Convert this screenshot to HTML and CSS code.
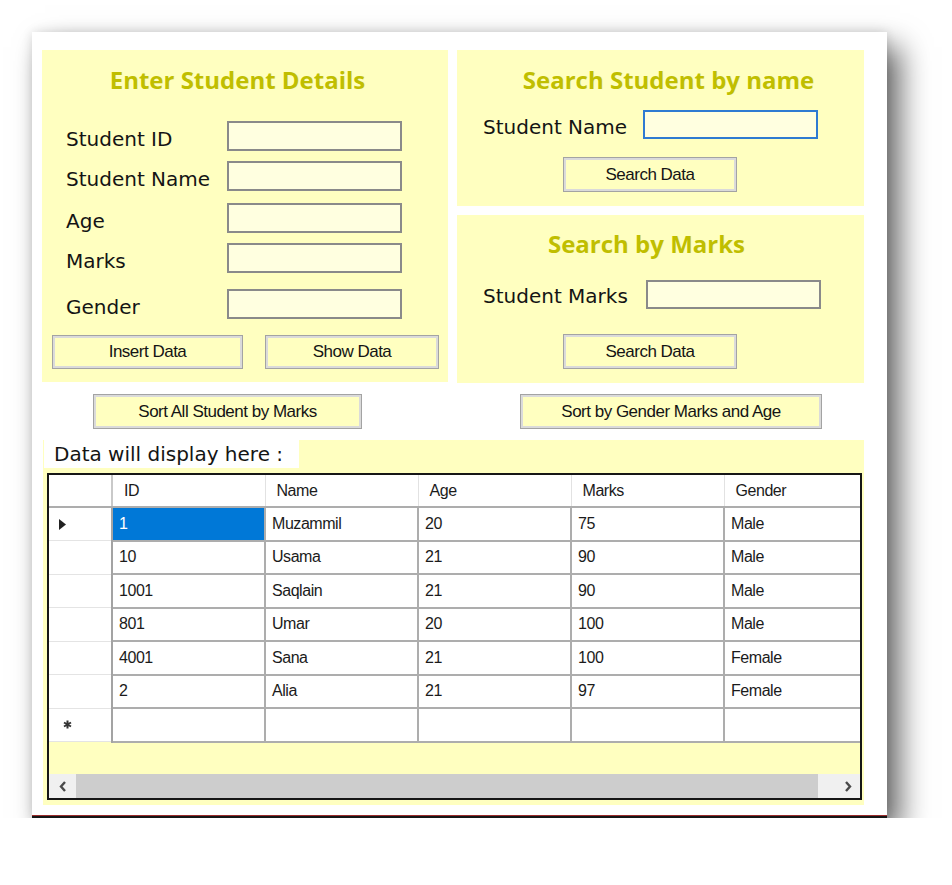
FILE: index.html
```
<!DOCTYPE html>
<html lang="en">
<head>
  <meta charset="UTF-8" />
  <meta name="viewport" content="width=device-width, initial-scale=1.0"/>
  <title>Student Records</title>
  <link rel="stylesheet" href="styles.css">
</head>
<body>
  <div class="window">
    <div class="top-area">
      <section class="panel entry-panel">
        <h2 class="panel-title entry-title">Enter Student Details</h2>
        <div class="field first">
          <label for="student-id">Student ID</label>
          <input type="text" id="student-id" />
        </div>
        <div class="field">
          <label for="student-name">Student Name</label>
          <input type="text" id="student-name" />
        </div>
        <div class="field gap-md">
          <label for="age">Age</label>
          <input type="text" id="age" />
        </div>
        <div class="field">
          <label for="marks">Marks</label>
          <input type="text" id="marks" />
        </div>
        <div class="field gap-lg">
          <label for="gender">Gender</label>
          <input type="text" id="gender" />
        </div>
        <div class="entry-actions">
          <button type="button" class="btn insert-btn">Insert Data</button>
          <button type="button" class="btn show-btn">Show Data</button>
        </div>
      </section>

      <div class="search-column">
        <section class="panel name-panel">
          <h2 class="panel-title name-title">Search Student by name</h2>
          <div class="search-field">
            <label for="search-name">Student Name</label>
            <input type="text" id="search-name" class="focused" />
          </div>
          <button type="button" class="btn search-btn">Search Data</button>
        </section>
        <section class="panel marks-panel">
          <h2 class="panel-title marks-title">Search by Marks</h2>
          <div class="search-field">
            <label for="search-marks">Student Marks</label>
            <input type="text" id="search-marks" />
          </div>
          <button type="button" class="btn search-btn">Search Data</button>
        </section>
      </div>
    </div>

    <div class="sort-row">
      <button type="button" class="btn sort-marks-btn">Sort All Student by Marks</button>
      <button type="button" class="btn sort-gender-btn">Sort by Gender Marks and Age</button>
    </div>

    <div class="data-panel">
      <div class="data-caption">Data will display here :</div>
      <div class="data-grid">
        <div class="grid-body">
          <table class="records">
            <colgroup>
              <col class="col-head" />
              <col class="col-data" />
              <col class="col-data" />
              <col class="col-data" />
              <col class="col-data" />
              <col class="col-data" />
            </colgroup>
            <thead>
              <tr>
                <th class="corner"></th>
                <th>ID</th>
                <th>Name</th>
                <th>Age</th>
                <th>Marks</th>
                <th>Gender</th>
              </tr>
            </thead>
            <tbody>
              <tr>
                <td class="row-head">
                  <svg width="7" height="11" viewBox="0 0 7 11"><path d="M0 0 L7 5.5 L0 11 Z" fill="#222"/></svg>
                </td>
                <td class="selected">1</td>
                <td>Muzammil</td>
                <td>20</td>
                <td>75</td>
                <td>Male</td>
              </tr>
              <tr>
                <td class="row-head"></td>
                <td>10</td>
                <td>Usama</td>
                <td>21</td>
                <td>90</td>
                <td>Male</td>
              </tr>
              <tr>
                <td class="row-head"></td>
                <td>1001</td>
                <td>Saqlain</td>
                <td>21</td>
                <td>90</td>
                <td>Male</td>
              </tr>
              <tr>
                <td class="row-head"></td>
                <td>801</td>
                <td>Umar</td>
                <td>20</td>
                <td>100</td>
                <td>Male</td>
              </tr>
              <tr>
                <td class="row-head"></td>
                <td>4001</td>
                <td>Sana</td>
                <td>21</td>
                <td>100</td>
                <td>Female</td>
              </tr>
              <tr>
                <td class="row-head"></td>
                <td>2</td>
                <td>Alia</td>
                <td>21</td>
                <td>97</td>
                <td>Female</td>
              </tr>
              <tr>
                <td class="row-head new-row">
                  <svg width="9" height="9" viewBox="0 0 9 9"><path d="M4.5 0.5 V8.5 M1 2.5 L8 6.5 M1 6.5 L8 2.5" stroke="#333" stroke-width="2"/></svg>
                </td>
                <td></td>
                <td></td>
                <td></td>
                <td></td>
                <td></td>
              </tr>
            </tbody>
          </table>
        </div>
        <div class="grid-fill"></div>
        <div class="hscroll">
          <div class="scroll-btn">
            <svg width="8" height="11" viewBox="0 0 8 11"><path d="M6 1 L2 5.5 L6 10" fill="none" stroke="#4a4a4a" stroke-width="2.4"/></svg>
          </div>
          <div class="scroll-thumb"></div>
          <div class="scroll-btn scroll-end">
            <svg width="8" height="11" viewBox="0 0 8 11"><path d="M2 1 L6 5.5 L2 10" fill="none" stroke="#4a4a4a" stroke-width="2.4"/></svg>
          </div>
        </div>
      </div>
    </div>
  </div>
</body>
</html>
```

FILE: styles.css
```
body {
  margin: 0;
  background: #fff;
  font-family: "DejaVu Sans", Verdana, sans-serif;
  color: #141414;
}

.window {
  margin: 32px 0 0 32px;
  width: 855px;
  height: 786px;
  box-sizing: border-box;
  padding-top: 18px;
  background: #fff;
  border-bottom: 2px solid #151515;
  box-shadow: inset 0 -1px 0 #9b2b2b, 13px 15px 28px rgba(0, 0, 0, 0.6), 0 0 10px rgba(0, 0, 0, 0.12);
}

/* ---------- top panels ---------- */

.top-area {
  display: flex;
  gap: 9px;
  margin-left: 10px;
}

.panel {
  background: #ffffc0;
  box-sizing: border-box;
}

.entry-panel {
  width: 406px;
  height: 332px;
}

.search-column {
  display: flex;
  flex-direction: column;
  gap: 9px;
  width: 407px;
}

.name-panel {
  height: 156px;
}

.marks-panel {
  height: 168px;
}

.panel-title {
  margin: 0;
  padding-top: 14px;
  height: 32px;
  line-height: 32px;
  font-family: "Open Sans", "Noto Sans", sans-serif;
  font-size: 24px;
  font-weight: bold;
  color: #c0be00;
  text-align: center;
}

.entry-title {
  padding-right: 15px;
}

.name-title {
  padding-left: 16px;
}

.marks-title {
  padding-top: 13px;
  padding-right: 28px;
}

.field {
  display: flex;
  align-items: center;
  height: 30px;
  margin-top: 10px;
}

.field.first {
  margin-top: 25px;
}

.field.gap-md {
  margin-top: 12px;
}

.field.gap-lg {
  margin-top: 16px;
}

.field label,
.search-field label {
  font-size: 20px;
  padding-top: 5px;
  box-sizing: border-box;
}

.field label {
  width: 185px;
  padding-left: 24px;
}

input {
  width: 175px;
  height: 30px;
  box-sizing: border-box;
  border: 2px solid #8a8a8a;
  background: #ffffe0;
  padding: 0 4px;
  font-size: 15px;
  outline: none;
}

input.focused {
  border-color: #2f7bd2;
}

.entry-actions {
  display: flex;
  margin-top: 16px;
  padding-left: 10px;
  gap: 22px;
}

.btn {
  height: 34px;
  box-sizing: border-box;
  border: 1px solid #a3a3a3;
  box-shadow: inset 0 0 0 2px #dadada;
  background: #ffffc0;
  font-family: "Liberation Sans", Arial, sans-serif;
  font-size: 17px;
  letter-spacing: -0.5px;
  color: #141414;
  padding: 0;
  cursor: pointer;
}

.insert-btn {
  width: 191px;
}

.show-btn {
  width: 174px;
}

.search-field {
  display: flex;
  align-items: center;
  height: 29px;
  margin-top: 14px;
  padding-left: 26px;
}

.search-field label {
  width: 160px;
}

.search-field input {
  height: 29px;
}

.marks-panel .search-field {
  margin-top: 20px;
}

.marks-panel .search-field label {
  width: 163px;
  padding-top: 2px;
}

.search-btn {
  display: block;
  width: 174px;
  height: 35px;
  margin: 18px 0 0 106px;
}

.marks-panel .search-btn {
  margin-top: 25px;
}

/* ---------- sort buttons ---------- */

.sort-row {
  display: flex;
  gap: 158px;
  margin: 11px 0 0 61px;
}

.sort-row .btn {
  height: 35px;
}

.sort-marks-btn {
  width: 269px;
}

.sort-gender-btn {
  width: 302px;
}

/* ---------- data grid ---------- */

.data-panel {
  width: 821px;
  height: 365px;
  margin: 11px 0 0 11px;
  background: #ffffc0;
}

.data-caption {
  width: 255px;
  height: 28px;
  margin-left: 1px;
  padding-left: 10px;
  box-sizing: border-box;
  background: #fff;
  font-size: 20px;
  line-height: 28px;
}

.data-grid {
  display: flex;
  flex-direction: column;
  width: 815px;
  height: 327px;
  margin: 5px 0 0 4px;
  box-sizing: border-box;
  border: 2px solid #161616;
  background: #ffffc0;
  overflow: hidden;
}

.grid-body {
  overflow: hidden;
}

.records {
  border-collapse: collapse;
  table-layout: fixed;
  width: 828px;
  font-family: "Liberation Sans", Arial, sans-serif;
  font-size: 16px;
  letter-spacing: -0.45px;
  color: #1b1b1b;
}

.col-head {
  width: 63px;
}

.col-data {
  width: 153px;
}

.records th,
.records td {
  padding: 0 0 0 6px;
  text-align: left;
  font-weight: normal;
  background: #fff;
  white-space: nowrap;
  overflow: hidden;
}

.records th {
  height: 31px;
  padding-left: 11px;
  border-right: 1px solid #e2e2e2;
  border-bottom: 2px solid #adadad;
}

.records th.corner {
  border-right: 2px solid #c9c9c9;
}

.records td {
  height: 31.5px;
  border-right: 2px solid #adadad;
  border-bottom: 2px solid #adadad;
}

.records td.row-head {
  padding-left: 10px;
  border-right: 2px solid #a3a3a3;
  border-bottom: 1px solid #e4e4e4;
}

.records td.row-head svg {
  display: block;
}

.records td.new-row {
  padding-left: 14px;
}

.records td.selected {
  background: #0078d7;
  color: #fff;
}

.grid-fill {
  flex: 1;
}

.hscroll {
  display: flex;
  height: 24px;
  background: #f0f0f0;
}

.scroll-btn {
  width: 27px;
  display: flex;
  align-items: center;
  justify-content: center;
}

.scroll-thumb {
  width: 742px;
  background: #cdcdcd;
}

.scroll-end {
  flex: 1;
  justify-content: flex-end;
  padding-right: 8px;
}
```
